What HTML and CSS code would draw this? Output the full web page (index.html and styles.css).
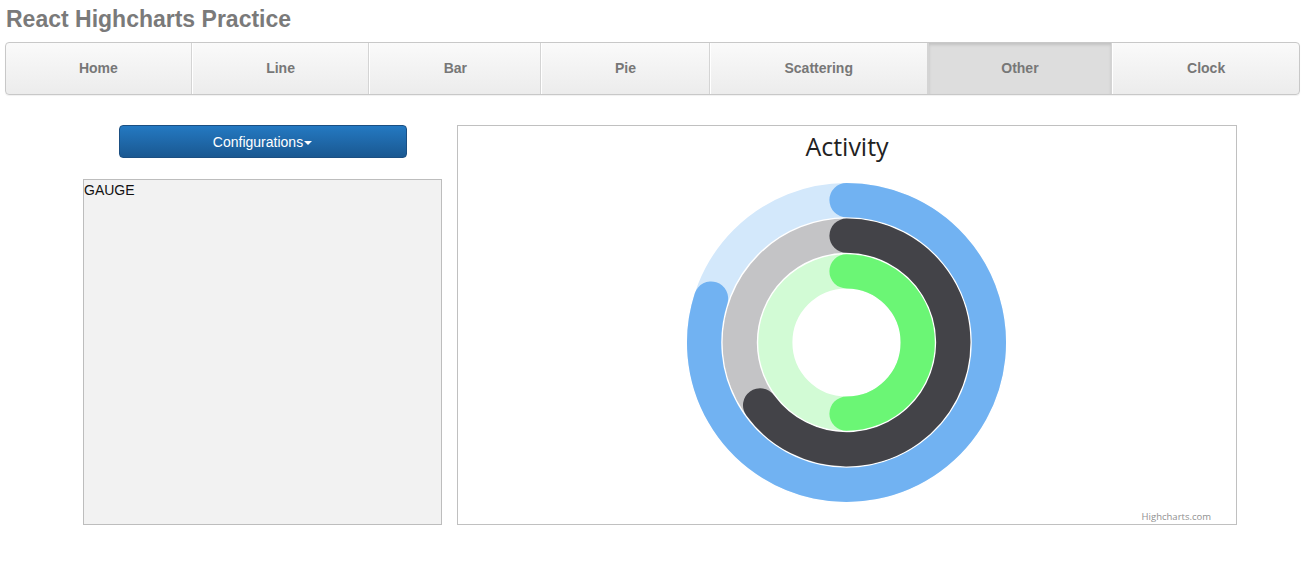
FILE: index.html
```html
<!DOCTYPE html>
<html>
<head>
<meta charset="utf-8">
<link rel="stylesheet" href="styles.css">
</head>
<body>
<h1 class="title">React Highcharts Practice</h1>
<nav class="nav">
  <a class="tab t1">Home</a>
  <a class="tab t2">Line</a>
  <a class="tab t3">Bar</a>
  <a class="tab t4">Pie</a>
  <a class="tab t5">Scattering</a>
  <a class="tab t6 active">Other</a>
  <a class="tab t7">Clock</a>
</nav>
<main class="content">
  <section class="left">
    <button class="config">Configurations<span class="caret"></span></button>
    <div class="panel">GAUGE</div>
  </section>
  <section class="chart">
    <div class="chart-title">Activity</div>
    <svg class="gauge" width="780" height="400" viewBox="0 0 780 400">
      <g transform="translate(389.5,217.5)">
        <circle r="142.4" fill="none" stroke="#d3e8fb" stroke-width="34.2"/>
        <circle r="106.8" fill="none" stroke="#c4c4c6" stroke-width="34.2"/>
        <circle r="71.2" fill="none" stroke="#d2fbd5" stroke-width="34.2"/>
        <path d="M0,-142.4 A142.4,142.4 0 1 1 -135.43,-44.00" fill="none" stroke="#71b2f2" stroke-width="34.2" stroke-linecap="round"/>
        <path d="M0,-106.8 A106.8,106.8 0 1 1 -86.40,62.78" fill="none" stroke="#434348" stroke-width="34.2" stroke-linecap="round"/>
        <path d="M0,-71.2 A71.2,71.2 0 0 1 0,71.2" fill="none" stroke="#6bf675" stroke-width="34.2" stroke-linecap="round"/>
      </g>
    </svg>
    <div class="credits">Highcharts.com</div>
  </section>
</main>
</body>
</html>
```
FILE: styles.css
```css
body {
  margin: 0;
  padding: 0 14px 0 5px;
  font-family: "Liberation Sans", Arial, sans-serif;
  background: #fff;
}
.title {
  margin: 0;
  padding: 6px 0 0 1px;
  height: 37px;
  box-sizing: border-box;
  font-size: 23px;
  font-weight: bold;
  color: #7a7a7a;
  line-height: 26px;
}
.nav {
  display: grid;
  grid-template-columns: 186fr 178fr 172fr 169fr 218fr 185fr 187fr;
  height: 51px;
  border: 1px solid #c8c8c8;
  border-radius: 4px;
  background: linear-gradient(#fafafa, #ececec);
  box-shadow: 0 1px 1px rgba(0,0,0,0.06);
  overflow: hidden;
  margin-top: 5px;
}
.tab {
  display: flex;
  align-items: center;
  justify-content: center;
  padding-bottom: 2px;
  font-size: 14px;
  font-weight: bold;
  color: #777;
  border-left: 1px solid #fff;
  border-right: 1px solid #d4d4d4;
}
.t1 { border-left: none; }
.t7 { border-right: none; }
.tab.active {
  background: #dddddd;
  box-shadow: inset 0 2px 3px rgba(0,0,0,0.12);
  border-left-color: #d4d4d4;
}
.content {
  display: flex;
  gap: 15px;
  padding: 30px 0 0 78px;
}
.left {
  width: 359px;
  display: flex;
  flex-direction: column;
  align-items: center;
}
.config {
  width: 288px;
  height: 33px;
  border: 1px solid #1b4f82;
  border-radius: 4px;
  background: linear-gradient(#2479c2, #1a5891);
  color: #fff;
  font-family: "Liberation Sans", Arial, sans-serif;
  font-size: 14px;
  padding: 0;
}
.caret {
  display: inline-block;
  width: 0;
  height: 0;
  border-left: 4px solid transparent;
  border-right: 4px solid transparent;
  border-top: 4px solid #fff;
  vertical-align: middle;
  margin-left: 1px;
}
.panel {
  margin-top: 21px;
  width: 359px;
  height: 346px;
  border: 1px solid #bdbdbd;
  background: #f2f2f2;
  font-size: 14px;
  color: #111;
  padding: 2px 0 0 0;
  box-sizing: border-box;
}
.chart {
  position: relative;
  width: 780px;
  height: 400px;
  border: 1px solid #c0c0c0;
  box-sizing: border-box;
}
.gauge {
  position: absolute;
  left: -1px;
  top: -1px;
}
.chart-title {
  position: absolute;
  left: 0;
  right: 0;
  top: 3px;
  text-align: center;
  font-family: "Open Sans", "DejaVu Sans", sans-serif;
  font-size: 25px;
  color: #222;
  z-index: 1;
}
.credits {
  position: absolute;
  right: 25px;
  bottom: 1px;
  font-family: "Open Sans", "DejaVu Sans", sans-serif;
  font-size: 9.5px;
  color: #909090;
  z-index: 1;
}
```
